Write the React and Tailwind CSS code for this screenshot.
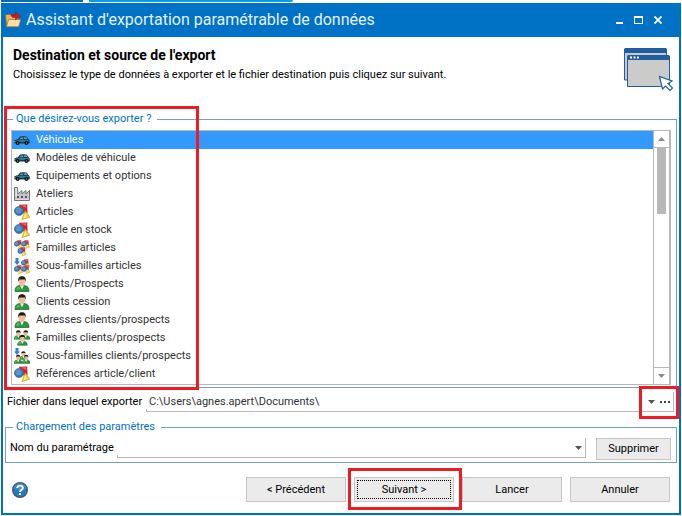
import React from "react";

function CarIcon() {
  return (
    <svg viewBox="0 0 16 16" className="size-4 shrink-0" aria-hidden="true">
      <path d="M0 9.5C0.300 8 2 7.600 3.800 7.200L6 4.800C6.800 4.200 11.500 4 13 4.900L14.700 7.300C15.800 8 16 9.500 15.600 11.500H0.600Z" fill="#17384a" />
      <path d="M1 9.300C2 8.200 4 8 6 7.900L14.500 7.800L15 9.500L9 10Z" fill="#297c9c" />
      <path d="M5.200 7.300L7 5.400H9V7.200ZM9.800 5.300H12.300L13.700 7.100H9.800Z" fill="#5f9db8" />
      <circle cx="3.700" cy="11" r="1.900" fill="#111" />
      <circle cx="12.400" cy="11" r="1.900" fill="#111" />
      <circle cx="3.700" cy="11" r="0.700" fill="#8a8a8a" />
      <circle cx="12.400" cy="11" r="0.700" fill="#8a8a8a" />
      <path d="M0 9.200h1.300v1H0z" fill="#d9b34a" />
    </svg>
  );
}

function FactoryIcon() {
  return (
    <svg viewBox="0 0 16 16" className="size-4 shrink-0" aria-hidden="true">
      <path d="M0.500 14.500V1.500H3.500L4 8L8 4.500V8L12 4.500V8L15.500 4.500V14.500Z" fill="#c4c4c4" stroke="#747474" />
      <path d="M1.500 2h1.200v9H1.500z" fill="#eee" />
      <path d="M3 10h2v2H3zM7 10h2v2H7zM11 10h2v2H11z" fill="#585858" />
      <path d="M1 13.500h14" stroke="#dedede" />
    </svg>
  );
}

function Shapes() {
  return (
    <>
      <path d="M5 0.800L13.200 0.500L13.600 9L7 9.500Z" fill="#d3222a" />
      <path d="M7 1.500L12 1.200L12.200 4Z" fill="#ef6a62" />
      <circle cx="5" cy="7" r="4.600" fill="#3273b3" stroke="#56687c" strokeWidth="0.600" />
      <circle cx="4.600" cy="6.400" r="3" fill="#5596cf" />
      <path d="M11.300 6.800L15.800 13.300L7.800 15.600Z" fill="#f6cf35" stroke="#b8922c" strokeWidth="0.600" />
      <path d="M11.200 8.500L12.300 13L9.300 14.500Z" fill="#fdea8c" />
    </>
  );
}

function ArticleIcon() {
  return (
    <svg viewBox="0 0 16 16" className="size-4 shrink-0" aria-hidden="true">
      <Shapes />
    </svg>
  );
}

function ArticleFamilyIcon() {
  return (
    <svg viewBox="0 0 16 16" className="size-4 shrink-0" aria-hidden="true">
      <g transform="scale(.55)"><Shapes /></g>
      <g transform="translate(7.200 0) scale(.55)"><Shapes /></g>
      <g transform="translate(3.500 7) scale(.57)"><Shapes /></g>
    </svg>
  );
}

function ArticleSubfamilyIcon() {
  return (
    <svg viewBox="0 0 16 16" className="size-4 shrink-0" aria-hidden="true">
      <g transform="translate(7 1) scale(.55)"><Shapes /></g>
      <g transform="translate(0 7) scale(.56)"><Shapes /></g>
      <g transform="translate(7.200 7) scale(.56)"><Shapes /></g>
      <path d="M1.500 0h3v3.500H6L3 7L0 3.500h1.500z" fill="#2f86c8" />
    </svg>
  );
}

function Person() {
  return (
    <>
      <path d="M1 15.500C1 11.500 2.500 10 5.500 9.500H10.500C13.500 10 15 11.500 15 15.500Z" fill="#2b9638" stroke="#1c6628" strokeWidth="0.700" />
      <path d="M2.300 14C2.500 12 3.300 11 5 10.500L6 13Z" fill="#58bd5c" />
      <path d="M6 9.300L8 13.500L10 9.300Z" fill="#f4f4f4" />
      <ellipse cx="8" cy="5.600" rx="3.300" ry="4.200" fill="#ebbd98" />
      <path d="M4.300 5.800C3.800 1.800 5.300 0.300 8 0.300S12.200 1.800 11.700 5.800L10.800 3.600H5.400Z" fill="#231b17" />
    </>
  );
}

function ClientIcon() {
  return (
    <svg viewBox="0 0 16 16" className="size-4 shrink-0" aria-hidden="true">
      <Person />
    </svg>
  );
}

function ClientFamilyIcon() {
  return (
    <svg viewBox="0 0 16 16" className="size-4 shrink-0" aria-hidden="true">
      <g transform="translate(-.5 0) scale(.6)"><Person /></g>
      <g transform="translate(7 0) scale(.6)"><Person /></g>
      <g transform="translate(2.800 4.500) scale(.7)"><Person /></g>
    </svg>
  );
}

function ClientSubfamilyIcon() {
  return (
    <svg viewBox="0 0 16 16" className="size-4 shrink-0" aria-hidden="true">
      <g transform="translate(5 3) scale(.55)"><Person /></g>
      <g transform="translate(-.5 6.500) scale(.58)"><Person /></g>
      <g transform="translate(7.500 6.500) scale(.58)"><Person /></g>
      <path d="M1.500 0h3v3.500H6L3 7L0 3.500h1.500z" fill="#2f86c8" />
    </svg>
  );
}

function FolderIcon() {
  return (
    <svg viewBox="0 0 16 16" className="size-4 shrink-0" aria-hidden="true">
      <path d="M0.500 3.500L1.500 2.500H5.500L6.500 4H13.500V14.500H1.500Z" fill="#e5b765" stroke="#8f6a32" strokeWidth="0.800" />
      <path d="M1.500 14.700L3.600 7.500H15.700L13.700 14.700Z" fill="#fbe2a4" stroke="#a37a3c" strokeWidth="0.800" />
      <path d="M6 2.700H10.500V0L15.500 4L10.500 8V5.500H7.500Z" fill="#d8191f" stroke="#8f1115" strokeWidth="0.500" />
    </svg>
  );
}

function HeaderArt() {
  return (
    <svg viewBox="0 0 50 44" className="h-11 w-[50px] shrink-0" aria-hidden="true">
      <path d="M0.500 2Q0.500 0.500 2 0.500H41Q42.500 0.500 42.500 2V32H0.500Z" fill="#c9c9c9" stroke="#1f5f9f" />
      <path d="M0 5V2Q0 0 2 0H41Q43 0 43 2V5Z" fill="#1f5f9f" />
      <path d="M3.500 38V9Q3.500 7.500 5 7.500H44Q45.500 7.500 45.500 9V38.500H3.500Z" fill="#cbcbca" stroke="#1f5f9f" />
      <path d="M3 12V9Q3 7 5 7H44Q46 7 46 9V12Z" fill="#1f5f9f" />
      <path d="M6 8.500h2v2H6zM9.500 8.500h2v2h-2zM13 8.500h2v2h-2z" fill="#fff" />
      <path d="M35.500 28.500L38.500 41L41.500 38L46 42.500L48.500 40L44 35.500L48 33Z" fill="#fff" stroke="#1f6594" strokeWidth="1.200" />
    </svg>
  );
}

function HelpIcon() {
  return (
    <svg viewBox="0 0 16 16" className="size-4" aria-hidden="true">
      <circle cx="8" cy="8" r="7.400" fill="#2279bd" stroke="#4b5560" strokeWidth="1.200" />
      <path d="M2 7A6 6 0 0 1 14 7Q8 9 2 7Z" fill="#3a8ccb" />
      <path d="M5.200 6.100C5.200 2.800 10.800 2.900 10.800 6C10.800 8 8 8 8 10" fill="none" stroke="#fff" strokeWidth="1.900" />
      <path d="M7 11.200h2v1.900H7z" fill="#fff" />
    </svg>
  );
}

function Arrow({ up }) {
  return (
    <svg viewBox="0 0 7 4" className="h-1 w-[7px]" aria-hidden="true">
      <path d={up ? "M0 4L3.500 0L7 4Z" : "M0 0H7L3.500 4Z"} fill="currentColor" />
    </svg>
  );
}

const items = [
  ["Véhicules", CarIcon],
  ["Modèles de véhicule", CarIcon],
  ["Equipements et options", CarIcon],
  ["Ateliers", FactoryIcon],
  ["Articles", ArticleIcon],
  ["Article en stock", ArticleIcon],
  ["Familles articles", ArticleFamilyIcon],
  ["Sous-familles articles", ArticleSubfamilyIcon],
  ["Clients/Prospects", ClientIcon],
  ["Clients cession", ClientIcon],
  ["Adresses clients/prospects", ClientIcon],
  ["Familles clients/prospects", ClientFamilyIcon],
  ["Sous-familles clients/prospects", ClientSubfamilyIcon],
  ["Références article/client", ArticleIcon],
];

const frame = "pointer-events-none absolute border-3 border-[#ed1c24]";
const button = "border border-[#c6c6c6] bg-[#ebebeb] text-center";

export default function App() {
  return (
    <div className="flex min-h-screen flex-col bg-white px-px pb-px font-[Roboto,sans-serif] text-[11px] leading-4 text-black">
      <div className="flex h-[2px] gap-[6px]">
        <div className="w-[82px] bg-[#0b6cb0]" />
        <div className="w-[204px] rounded-br-xs bg-[#0a9be3]" />
      </div>
      <main className="mt-px flex flex-1 flex-col border-2 border-t-0 border-[#0072c6]">
        <header className="flex h-[34px] items-center bg-[#0072c6] pr-[17px] pl-[2px] text-white">
          <FolderIcon />
          <h1 className="ml-[5px] flex-1 text-base text-[#e3f0fb]">Assistant d'exportation paramétrable de données</h1>
          <div className="flex gap-[11px]">
            <button aria-label="Réduire" className="flex size-2 items-end justify-end"><span className="h-[2px] w-[7px] bg-white" /></button>
            <button aria-label="Agrandir" className="h-2 w-[9px] border border-t-2 border-white" />
            <button aria-label="Fermer" className="h-2 w-2">
              <svg viewBox="0 0 8 8" className="size-2" aria-hidden="true"><path d="M0.500 0.500L7.500 7.500M7.500 0.500L0.500 7.500" stroke="#fff" strokeWidth="1.800" /></svg>
            </button>
          </div>
        </header>

        <section className="flex justify-between pt-[9px] pr-[5px] pl-[10px]">
          <div className="flex flex-col gap-[2px] leading-[18px]">
            <h2 className="text-sm leading-[18px] font-bold">Destination et source de l'export</h2>
            <p>Choisissez le type de données à exporter et le fichier destination puis cliquez sur suivant.</p>
          </div>
          <div className="pt-[2px]"><HeaderArt /></div>
        </section>

        <fieldset className="relative mx-[2px] mt-[19px] border border-[#75a1c4] px-[5px] pt-[3px] pb-[2px]">
          <legend className="ml-[2px] pr-[6px] pl-[3px] text-[#0072c6]">Que désirez-vous exporter ?</legend>
          <div className="flex border border-r-2 border-[#b8b8b8]">
            <ul role="listbox" aria-label="Que désirez-vous exporter ?" className="flex-1 pb-px text-[#333]">
              {items.map(([label, Icon], i) => (
                <li
                  key={label}
                  role="option"
                  aria-selected={i === 0}
                  className="flex h-[18px] items-center gap-[6px] pl-[2px] leading-[18px] aria-selected:bg-[#3399ff] aria-selected:text-white"
                >
                  <Icon />
                  {label}
                </li>
              ))}
            </ul>
            <div className="flex w-4 flex-col items-center border-l border-[#b8b8b8] text-[#8a8a8a]">
              <button aria-label="Défiler vers le haut" className="flex h-[17px] w-full items-center justify-center border-b border-[#b8b8b8]"><Arrow up /></button>
              <div className="h-[66px] w-[9px] bg-[#b8b8b8]" />
              <button aria-label="Défiler vers le bas" className="mt-auto flex h-[17px] w-full items-center justify-center border-t border-[#b8b8b8]"><Arrow /></button>
            </div>
          </div>
          <div className={`${frame} -top-[21px] -bottom-[3px] -left-[2px] w-[195px]`} />
        </fieldset>

        <div className="mt-1 mr-[5px] ml-[4px] flex h-5 items-stretch">
          <label htmlFor="file" className="w-[139px] leading-5">Fichier dans lequel exporter</label>
          <span className="mt-[17px] w-px bg-[#b8b8b8]" />
          <input id="file" defaultValue="C:\Users\agnes.apert\Documents\" className="min-w-0 flex-1 border-b border-[#b8b8b8] pl-[2px] text-[#333] outline-none" />
          <div className="relative flex items-center gap-[5px] border-r border-b border-[#b8b8b8] pr-[3px] text-[#555]">
            <button aria-label="Fichiers récents"><Arrow /></button>
            <button aria-label="Parcourir" className="flex gap-[2px]">
              <span className="size-[2px] bg-[#444]" />
              <span className="size-[2px] bg-[#444]" />
              <span className="size-[2px] bg-[#444]" />
            </button>
            <div className={`${frame} -top-[6px] -right-[6px] -bottom-[8px] -left-[9px]`} />
          </div>
        </div>

        <fieldset className="mx-[2px] mt-[7px] border border-[#75a1c4] pt-[3px] pr-[5px] pb-[2px] pl-[4px]">
          <legend className="ml-[3px] pr-[6px] pl-[3px] text-[#0072c6]">Chargement des paramètres</legend>
          <div className="flex">
            <label htmlFor="preset" className="w-[107px] leading-5">Nom du paramétrage</label>
            <span className="mt-[17px] mb-[2px] w-px bg-[#b8b8b8]" />
            <div className="relative mb-[2px] flex-1">
              <select id="preset" className="block h-5 w-full appearance-none border-r border-b border-[#b8b8b8] outline-none" />
              <span className="pointer-events-none absolute top-2 right-1 flex text-[#555]"><Arrow /></span>
            </div>
            <button className={`${button} ml-[10px] h-[22px] w-[75px]`}>Supprimer</button>
          </div>
        </fieldset>

        <footer className="mt-[14px] mb-[10px] flex items-center gap-2 pr-[9px] pl-[9px]">
          <button aria-label="Aide" className="mr-auto"><HelpIcon /></button>
          <button className={`${button} h-[25px] w-[100px]`}>&lt; Précédent</button>
          <div className="relative">
            <button className={`${button} block h-[25px] w-[100px] p-[2px]`}>
              <span className="block border border-dotted border-black leading-[17px]">Suivant &gt;</span>
            </button>
            <div className={`${frame} -top-[9px] -right-[8px] -bottom-[8px] -left-[6px]`} />
          </div>
          <button className={`${button} h-[25px] w-[100px]`}>Lancer</button>
          <button className={`${button} h-[25px] w-[100px]`}>Annuler</button>
        </footer>
      </main>
    </div>
  );
}
